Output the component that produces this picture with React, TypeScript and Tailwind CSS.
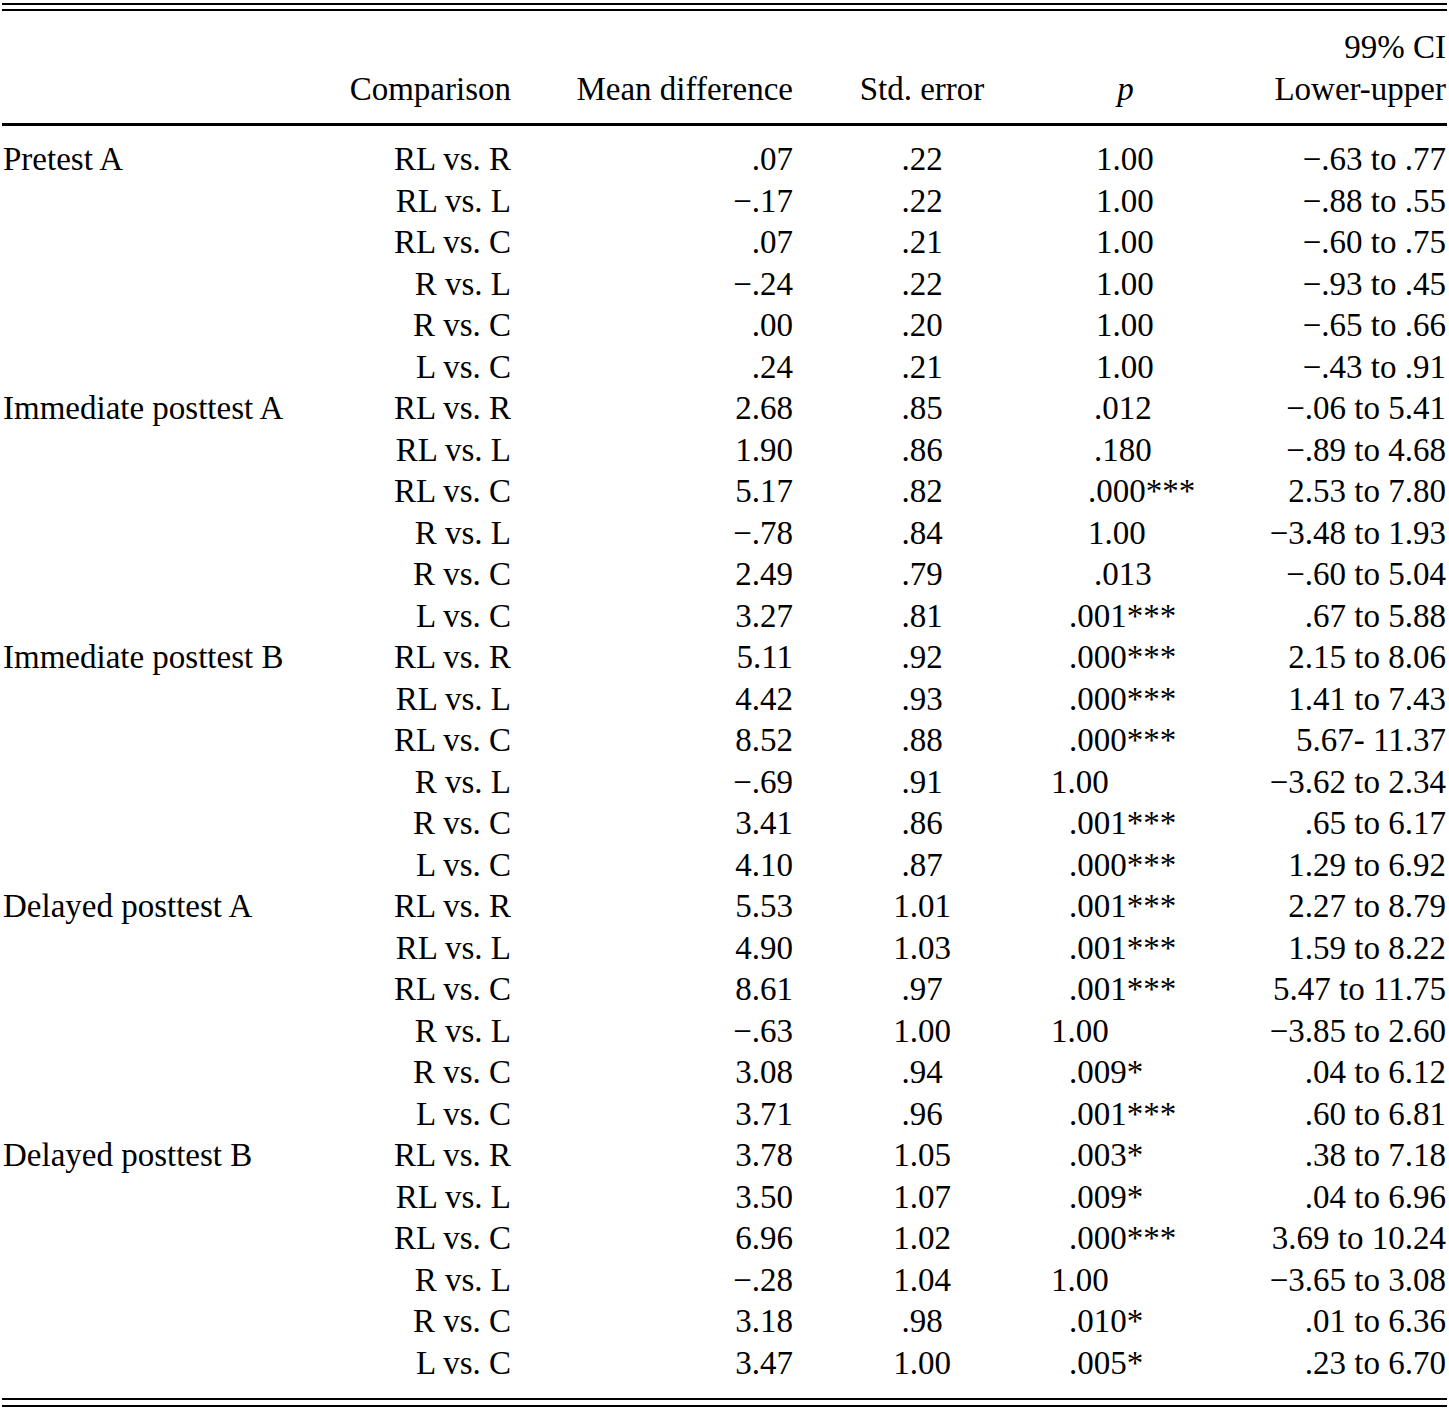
import React from 'react';

interface Row {
  comparison: string;
  mean: string;
  se: string;
  p: string;
  pOffset: string;
  ci: string;
}

interface Group {
  label: string;
  rows: Row[];
}

const groups: Group[] = [
  {
    label: 'Pretest A',
    rows: [
      { comparison: 'RL vs. R', mean: '.07', se: '.22', p: '1.00', pOffset: 'pl-[45px]', ci: '−.63 to .77' },
      { comparison: 'RL vs. L', mean: '−.17', se: '.22', p: '1.00', pOffset: 'pl-[45px]', ci: '−.88 to .55' },
      { comparison: 'RL vs. C', mean: '.07', se: '.21', p: '1.00', pOffset: 'pl-[45px]', ci: '−.60 to .75' },
      { comparison: 'R vs. L', mean: '−.24', se: '.22', p: '1.00', pOffset: 'pl-[45px]', ci: '−.93 to .45' },
      { comparison: 'R vs. C', mean: '.00', se: '.20', p: '1.00', pOffset: 'pl-[45px]', ci: '−.65 to .66' },
      { comparison: 'L vs. C', mean: '.24', se: '.21', p: '1.00', pOffset: 'pl-[45px]', ci: '−.43 to .91' },
    ],
  },
  {
    label: 'Immediate posttest A',
    rows: [
      { comparison: 'RL vs. R', mean: '2.68', se: '.85', p: '.012', pOffset: 'pl-[43px]', ci: '−.06 to 5.41' },
      { comparison: 'RL vs. L', mean: '1.90', se: '.86', p: '.180', pOffset: 'pl-[43px]', ci: '−.89 to 4.68' },
      { comparison: 'RL vs. C', mean: '5.17', se: '.82', p: '.000***', pOffset: 'pl-[37px]', ci: '2.53 to 7.80' },
      { comparison: 'R vs. L', mean: '−.78', se: '.84', p: '1.00', pOffset: 'pl-[37px]', ci: '−3.48 to 1.93' },
      { comparison: 'R vs. C', mean: '2.49', se: '.79', p: '.013', pOffset: 'pl-[43px]', ci: '−.60 to 5.04' },
      { comparison: 'L vs. C', mean: '3.27', se: '.81', p: '.001***', pOffset: 'pl-[18px]', ci: '.67 to 5.88' },
    ],
  },
  {
    label: 'Immediate posttest B',
    rows: [
      { comparison: 'RL vs. R', mean: '5.11', se: '.92', p: '.000***', pOffset: 'pl-[18px]', ci: '2.15 to 8.06' },
      { comparison: 'RL vs. L', mean: '4.42', se: '.93', p: '.000***', pOffset: 'pl-[18px]', ci: '1.41 to 7.43' },
      { comparison: 'RL vs. C', mean: '8.52', se: '.88', p: '.000***', pOffset: 'pl-[18px]', ci: '5.67- 11.37' },
      { comparison: 'R vs. L', mean: '−.69', se: '.91', p: '1.00', pOffset: 'pl-0', ci: '−3.62 to 2.34' },
      { comparison: 'R vs. C', mean: '3.41', se: '.86', p: '.001***', pOffset: 'pl-[18px]', ci: '.65 to 6.17' },
      { comparison: 'L vs. C', mean: '4.10', se: '.87', p: '.000***', pOffset: 'pl-[18px]', ci: '1.29 to 6.92' },
    ],
  },
  {
    label: 'Delayed posttest A',
    rows: [
      { comparison: 'RL vs. R', mean: '5.53', se: '1.01', p: '.001***', pOffset: 'pl-[18px]', ci: '2.27 to 8.79' },
      { comparison: 'RL vs. L', mean: '4.90', se: '1.03', p: '.001***', pOffset: 'pl-[18px]', ci: '1.59 to 8.22' },
      { comparison: 'RL vs. C', mean: '8.61', se: '.97', p: '.001***', pOffset: 'pl-[18px]', ci: '5.47 to 11.75' },
      { comparison: 'R vs. L', mean: '−.63', se: '1.00', p: '1.00', pOffset: 'pl-0', ci: '−3.85 to 2.60' },
      { comparison: 'R vs. C', mean: '3.08', se: '.94', p: '.009*', pOffset: 'pl-[18px]', ci: '.04 to 6.12' },
      { comparison: 'L vs. C', mean: '3.71', se: '.96', p: '.001***', pOffset: 'pl-[18px]', ci: '.60 to 6.81' },
    ],
  },
  {
    label: 'Delayed posttest B',
    rows: [
      { comparison: 'RL vs. R', mean: '3.78', se: '1.05', p: '.003*', pOffset: 'pl-[18px]', ci: '.38 to 7.18' },
      { comparison: 'RL vs. L', mean: '3.50', se: '1.07', p: '.009*', pOffset: 'pl-[18px]', ci: '.04 to 6.96' },
      { comparison: 'RL vs. C', mean: '6.96', se: '1.02', p: '.000***', pOffset: 'pl-[18px]', ci: '3.69 to 10.24' },
      { comparison: 'R vs. L', mean: '−.28', se: '1.04', p: '1.00', pOffset: 'pl-0', ci: '−3.65 to 3.08' },
      { comparison: 'R vs. C', mean: '3.18', se: '.98', p: '.010*', pOffset: 'pl-[18px]', ci: '.01 to 6.36' },
      { comparison: 'L vs. C', mean: '3.47', se: '1.00', p: '.005*', pOffset: 'pl-[18px]', ci: '.23 to 6.70' },
    ],
  },
];

const cols = 'grid grid-cols-[297px_211px_282px_258px_149px_246px]';

export default function App() {
  return (
    <div
      className="w-[1449px] bg-white text-black text-[33px] leading-[41.5px]"
      style={{ fontFamily: '"Liberation Serif", "Times New Roman", serif' }}
    >
      {/* top double rule */}
      <div className="mx-[2px] pt-[3px]">
        <div className="h-[2px] bg-black" />
        <div className="h-[2px] bg-black mt-[4px]" />
      </div>

      {/* header */}
      <div className={`${cols} px-[3px] pt-[16px] pb-[13px]`}>
        <div />
        <div className="text-right self-end">Comparison</div>
        <div className="text-right self-end">Mean difference</div>
        <div className="text-center self-end">Std. error</div>
        <div className="text-center self-end italic">p</div>
        <div className="text-right">
          <div>99% CI</div>
          <div>Lower-upper</div>
        </div>
      </div>
      <div className="mx-[2px] h-[3px] bg-black" />

      {/* body */}
      <div className="px-[3px] pt-[13px] pb-[14px]">
        {groups.map((group) =>
          group.rows.map((row, i) => (
            <div key={group.label + row.comparison} className={`${cols} h-[41.52px] whitespace-nowrap`}>
              <div>{i === 0 ? group.label : ''}</div>
              <div className="text-right">{row.comparison}</div>
              <div className="text-right">{row.mean}</div>
              <div className="text-center">{row.se}</div>
              <div className={row.pOffset}>{row.p}</div>
              <div className="text-right">{row.ci}</div>
            </div>
          ))
        )}
      </div>

      {/* bottom double rule */}
      <div className="mx-[2px]">
        <div className="h-[2px] bg-black" />
        <div className="h-[2px] bg-black mt-[5px]" />
      </div>
    </div>
  );
}
